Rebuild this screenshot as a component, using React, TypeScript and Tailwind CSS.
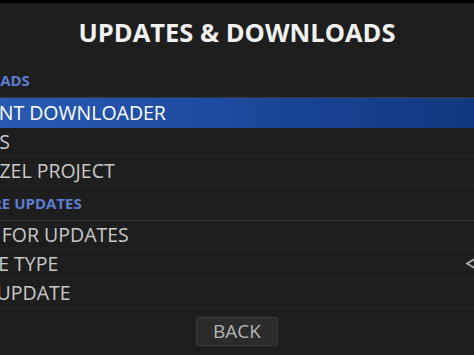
import React from "react";

const font = { fontFamily: '"Open Sans", "Noto Sans", sans-serif' };

function Row({ children, right }: { children: React.ReactNode; right?: React.ReactNode }) {
  return (
    <div className="relative flex h-[29px] items-center border-b border-[#2a2a2a] text-[19.5px] leading-none text-[#c9c9c9]">
      <span className="ml-[-1px] whitespace-nowrap">{children}</span>
      {right}
    </div>
  );
}

function Header({ children }: { children: React.ReactNode }) {
  return (
    <div className="flex h-[35px] items-center border-b border-[#3a3a42] pt-[1px] text-[15px] font-bold leading-none text-[#5b7ed3]">
      <span className="ml-[-6px] whitespace-nowrap">{children}</span>
    </div>
  );
}

export default function App() {
  return (
    <div className="relative h-[355px] w-[474px] overflow-hidden bg-[#1e1e1e]" style={font}>
      <div className="h-[3px] bg-black" />
      <div className="flex h-[60px] items-center justify-center">
        <h1 className="whitespace-nowrap text-[25.5px] font-bold leading-none text-[#f2f2f2]">UPDATES &amp; DOWNLOADS</h1>
      </div>
      <div className="ml-[-64px] mr-[-40px]">
        <Header>DOWNLOADS</Header>
        <div className="flex h-[30px] items-center bg-gradient-to-r from-[#2c5fb8] via-[#1d4a9e] to-[#0f3479] text-[19.5px] leading-none text-white">
          <span className="ml-[-1px] whitespace-nowrap">CONTENT DOWNLOADER</span>
        </div>
        <Row>THEMES</Row>
        <Row>THE BEZEL PROJECT</Row>
        <Header>SOFTWARE UPDATES</Header>
        <Row>CHECK FOR UPDATES</Row>
        <Row
          right={
            <svg className="absolute left-[529px] top-[7px]" width="12" height="13" viewBox="0 0 12 13">
              <path d="M10.5 1.5 L2 6.5 L10.5 11.5 Z" fill="none" stroke="#a8a8a8" strokeWidth="2" strokeLinejoin="round" />
            </svg>
          }
        >
          UPDATE TYPE
        </Row>
        <Row>START UPDATE</Row>
      </div>
      <div className="flex justify-center pt-[9px]">
        <div className="flex h-[29px] w-[82px] items-center justify-center rounded-[2px] border border-[#3a3a3a] bg-[#2b2b2b] text-[19px] leading-none text-[#b5b5b5]">
          BACK
        </div>
      </div>
    </div>
  );
}
